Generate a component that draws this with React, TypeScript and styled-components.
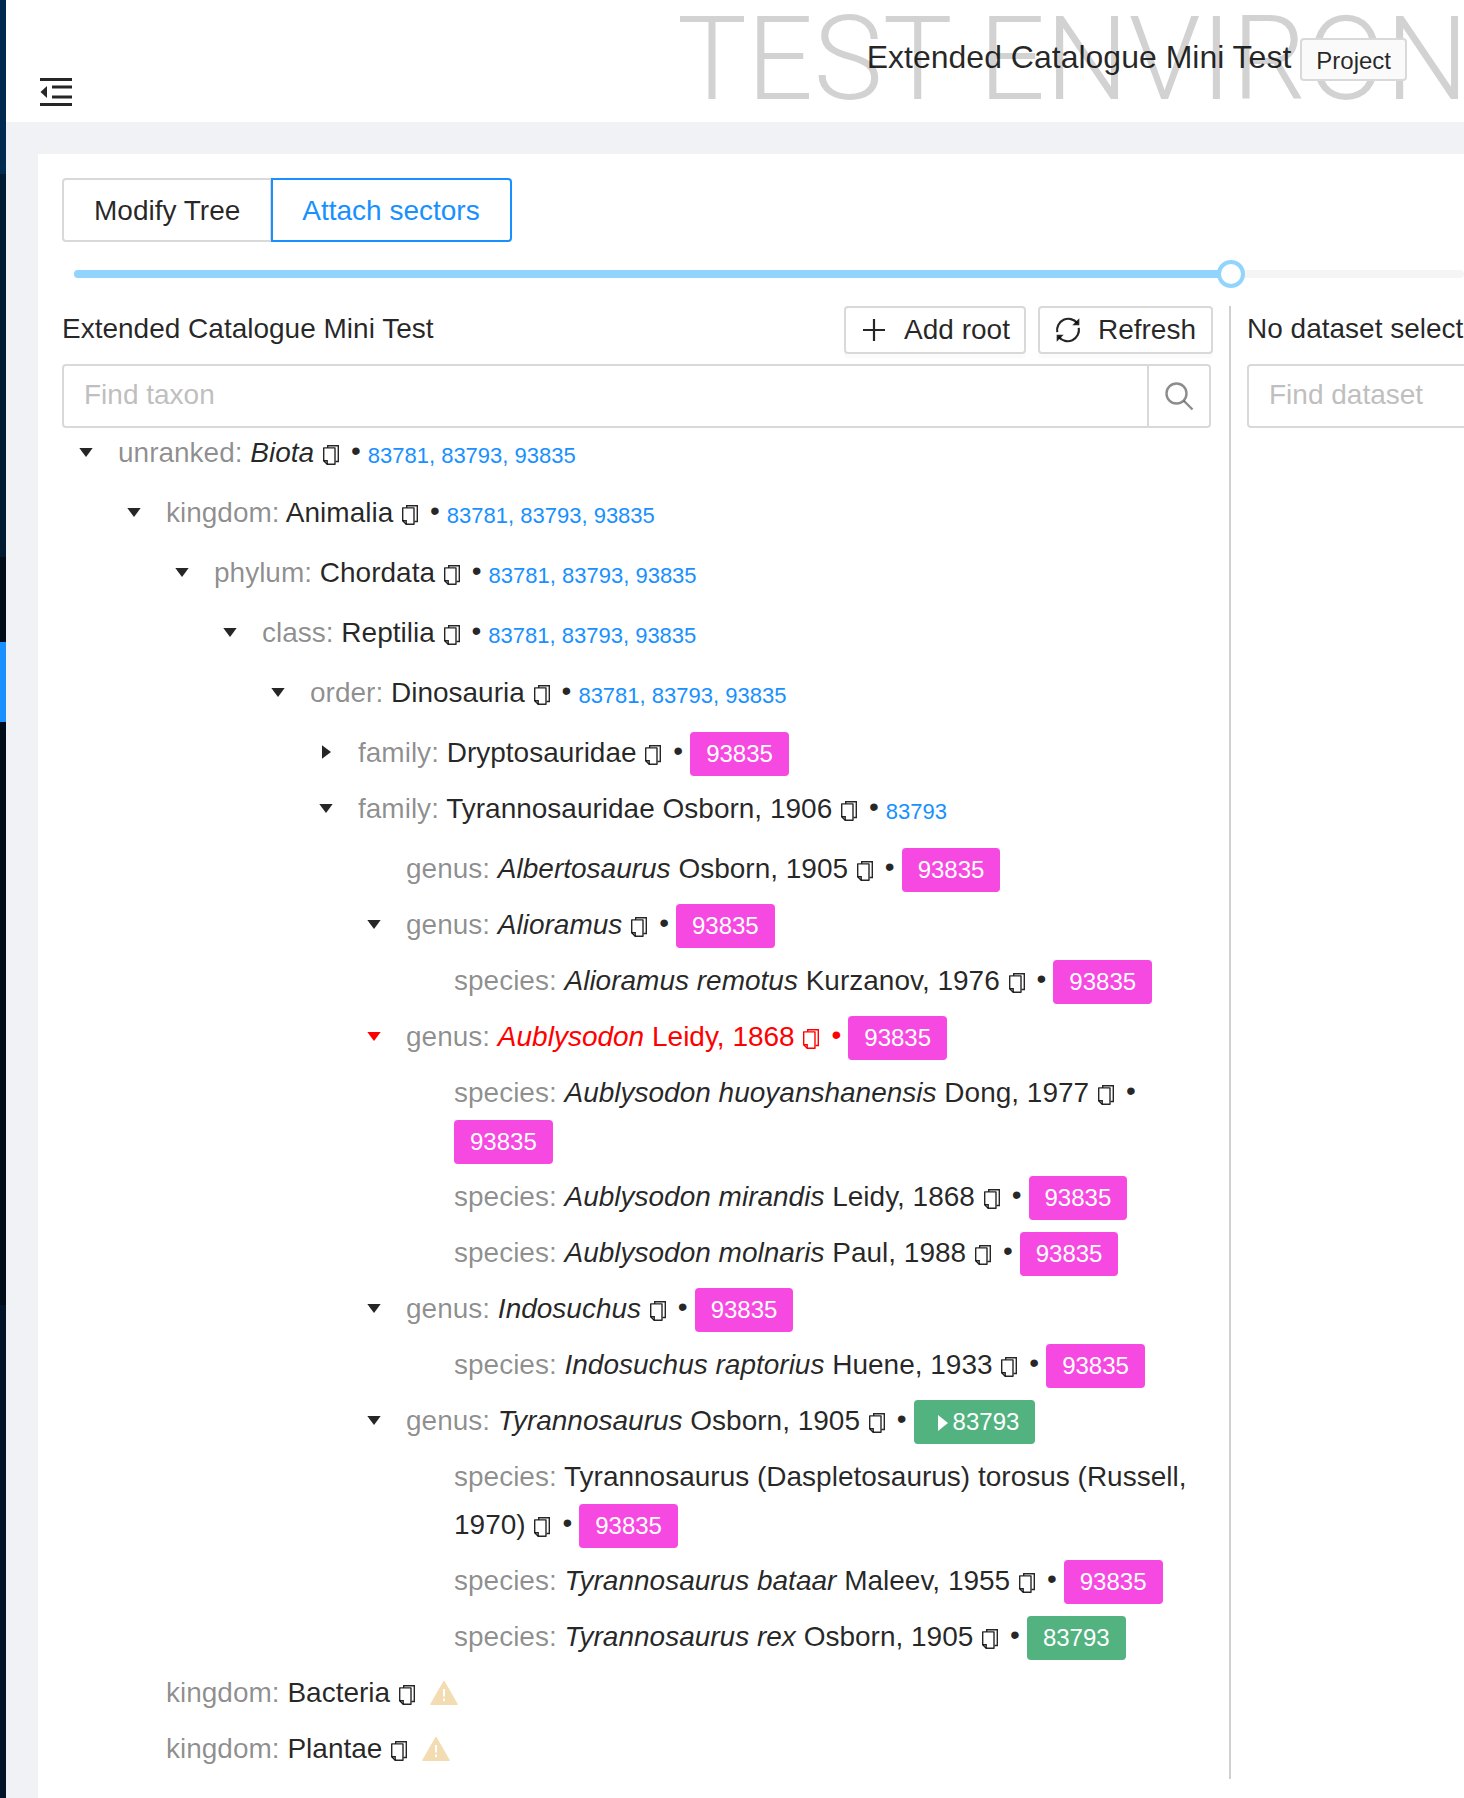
import React from 'react';
import styled, { createGlobalStyle } from 'styled-components';

const GlobalStyle = createGlobalStyle`
    html, body {
        margin: 0;
        padding: 0;
        height: 100%;
        overflow: hidden;
        background: #f0f2f5;
    }
    body {
        font-family: "Liberation Sans", Arial, sans-serif;
        color: rgba(0, 0, 0, 0.85);
    }
`;

const Layout = styled.div`
    display: flex;
    width: 1464px;
    height: 1798px;
    overflow: hidden;
`;

const Sider = styled.aside`
    flex: 0 0 6px;
    display: flex;
    flex-direction: column;
    background: #001529;
`;

const SiderBlock = styled.div<{ $h: number; $color: string }>`
    flex: 0 0 ${p => p.$h}px;
    background: ${p => p.$color};
`;

const Main = styled.div`
    flex: 1;
    min-width: 0;
    display: flex;
    flex-direction: column;
`;

const Header = styled.header`
    position: relative;
    flex: 0 0 122px;
    display: flex;
    justify-content: space-between;
    background: #fff;
    overflow: hidden;
`;

const Watermark = styled.div`
    position: absolute;
    left: 671px;
    top: -6px;
    font-family: Roboto, "Liberation Sans", sans-serif;
    font-weight: 300;
    font-size: 117px;
    line-height: 130px;
    color: #d2d2d2;
    white-space: nowrap;
`;

const Trigger = styled.div`
    margin: 78px 0 0 34px;
    width: 32px;
    height: 28px;
    color: rgba(0, 0, 0, 0.85);
`;

const HeaderRight = styled.div`
    position: relative;
    display: flex;
    align-items: flex-start;
    padding: 38px 57px 0 0;
`;

const HeaderTitle = styled.span`
    font-size: 32px;
    line-height: 38px;
    margin-right: 9px;
`;

const HeaderTag = styled.span`
    height: 43px;
    box-sizing: border-box;
    padding: 0 14px;
    font-size: 24px;
    line-height: 41px;
    background: #fafafa;
    border: 2px solid #d9d9d9;
    border-radius: 4px;
`;

const Content = styled.main`
    flex: 1;
    margin: 32px 0 0 32px;
    padding: 24px 0 0 24px;
    background: #fff;
    min-height: 0;
`;

const Tabs = styled.div`
    display: flex;
`;

const Tab = styled.div<{ $active?: boolean }>`
    height: 64px;
    box-sizing: border-box;
    padding: 0 30px 0 ${p => (p.$active ? 29 : 30)}px;
    font-size: 28px;
    line-height: 62px;
    border: 2px solid ${p => (p.$active ? '#1890ff' : '#d9d9d9')};
    color: ${p => (p.$active ? '#1890ff' : 'rgba(0, 0, 0, 0.85)')};
    margin-left: ${p => (p.$active ? '-1px' : '0')};
    border-radius: ${p => (p.$active ? '0 4px 4px 0' : '4px 0 0 4px')};
    position: relative;
`;

const Slider = styled.div`
    position: relative;
    height: 8px;
    margin: 28px 0 0 12px;
    background: #f5f5f5;
    border-radius: 4px;
`;

const SliderTrack = styled.div`
    height: 8px;
    width: 1157px;
    background: #91d5ff;
    border-radius: 4px;
`;

const SliderHandle = styled.div`
    position: absolute;
    left: 1143px;
    top: -10px;
    width: 28px;
    height: 28px;
    box-sizing: border-box;
    border: 4px solid #91d5ff;
    border-radius: 50%;
    background: #fff;
`;

const Columns = styled.div`
    display: flex;
    margin-top: 28px;
`;

const LeftColumn = styled.section`
    flex: 0 0 1169px;
    box-sizing: border-box;
    padding-right: 16px;
    border-right: 2px solid #d0d0d0;
    height: 1473px;
`;

const RightColumn = styled.section`
    flex: 0 0 260px;
    padding-left: 16px;
    overflow: hidden;
`;

const ColumnHeader = styled.div`
    display: flex;
    align-items: flex-start;
    height: 48px;
    margin-bottom: 10px;
`;

const ColumnTitle = styled.h2`
    margin: 0 auto 0 0;
    font-size: 28px;
    font-weight: 400;
    line-height: 46px;
    white-space: nowrap;
`;

const Button = styled.div<{ $pad: number; $gap: number }>`
    display: flex;
    align-items: center;
    height: 48px;
    box-sizing: border-box;
    margin-left: 12px;
    padding: 0 ${p => (p.$pad === 16 ? 14 : 15)}px 0 ${p => p.$pad}px;
    font-size: 28px;
    border: 2px solid #d9d9d9;
    border-radius: 4px;
    box-shadow: 0 4px 0 rgba(0, 0, 0, 0.015);
    white-space: nowrap;
    svg {
        margin-right: ${p => p.$gap}px;
    }
`;

const Search = styled.div<{ $inset?: boolean }>`
    display: flex;
    height: 64px;
    box-sizing: border-box;
    margin-right: ${p => (p.$inset ? 2 : 0)}px;
    border: 2px solid #d9d9d9;
    border-radius: 4px;
`;

const SearchText = styled.div`
    flex: 1;
    padding-left: 20px;
    font-size: 28px;
    line-height: 58px;
    color: #bfbfbf;
    white-space: nowrap;
`;

const SearchButton = styled.div`
    flex: 0 0 60px;
    display: flex;
    align-items: center;
    justify-content: center;
    border-left: 2px solid #d9d9d9;
    color: rgba(0, 0, 0, 0.45);
`;

const Tree = styled.div`
    padding-top: 1px;
    font-size: 28px;
    line-height: 48px;
`;

const Node = styled.div<{ $level: number; $link?: boolean }>`
    display: flex;
    padding-left: ${p => p.$level * 48}px;
    margin-bottom: ${p => (p.$link ? 12 : 8)}px;
`;

const Switcher = styled.div<{ $danger?: boolean }>`
    flex: 0 0 48px;
    height: 46px;
    display: flex;
    align-items: center;
    justify-content: center;
    color: ${p => (p.$danger ? '#ff0000' : 'rgba(0, 0, 0, 0.85)')};
`;

const NodeText = styled.div<{ $danger?: boolean }>`
    flex: 1;
    min-width: 0;
    padding: 0 8px;
    color: ${p => (p.$danger ? '#ff0000' : 'rgba(0, 0, 0, 0.85)')};
`;

const Rank = styled.span`
    color: rgba(0, 0, 0, 0.45);
`;

const Sci = styled.i`
    font-style: italic;
`;

const Copy = styled.svg`
    display: inline-block;
    width: 16px;
    height: 20px;
    margin: 0 4px 0 1px;
    vertical-align: -3px;
`;

const Dot = styled.span`
    margin: 0 7px 0 8px;
    line-height: 1;
    vertical-align: 2px;
`;

const Links = styled.span`
    font-size: 22px;
    line-height: 1;
    color: #1890ff;
    vertical-align: -1px;
`;

const Tag = styled.span<{ $green?: boolean }>`
    display: inline-block;
    box-sizing: border-box;
    height: 44px;
    padding: 0 16px;
    font-size: 24px;
    line-height: 44px;
    color: #fff;
    border-radius: 4px;
    background: ${p => (p.$green ? '#52b280' : '#f649e1')};
`;

const TagCaret = styled.svg`
    width: 10px;
    height: 16px;
    margin: 0 5px 0 8px;
    vertical-align: -1px;
`;

const Warning = styled.svg`
    width: 28px;
    height: 25px;
    margin-left: 11px;
    vertical-align: -3px;
`;

const FoldIcon = () => (
    <svg width="32" height="28" viewBox="0 0 32 28" fill="currentColor">
        <rect x="0" y="0" width="32" height="3" />
        <rect x="0" y="25" width="32" height="3" />
        <rect x="12" y="7.5" width="20" height="3" />
        <rect x="12" y="17.5" width="20" height="3" />
        <path d="M0.5 14 L7 8 V20 Z" />
    </svg>
);

const CopyIcon = () => (
    <Copy viewBox="0 0 16 20" fill="none" stroke="currentColor" strokeWidth="1.4">
        <path d="M4.7 2.8 V0.7 H15.3 V16.5 H12.6" />
        <path d="M0.7 2.9 H12 V19.3 H4.2 L0.7 15.8 Z" strokeLinejoin="round" />
        <path d="M0.7 15.8 H4.2 V19.3" />
    </Copy>
);

const WarningIcon = () => (
    <Warning viewBox="0 0 28 25">
        <path d="M14 1 L27.5 24.5 H0.5 Z" fill="#f3dcb2" stroke="#f3dcb2" strokeLinejoin="round" />
        <rect x="13" y="9" width="2" height="7.5" fill="#fff" />
        <rect x="13" y="18.5" width="2" height="2.5" fill="#fff" />
    </Warning>
);

const Caret = ({ open }: { open: boolean }) =>
    open ? (
        <svg width="14" height="9" viewBox="0 0 14 9" fill="currentColor">
            <path d="M0.3 0 H13.7 L7 9 Z" />
        </svg>
    ) : (
        <svg width="9" height="14" viewBox="0 0 9 14" fill="currentColor">
            <path d="M0 0.3 V13.7 L9 7 Z" />
        </svg>
    );

type Row = {
    level: number;
    rank: string;
    sci?: string;
    rest?: string;
    caret?: 'open' | 'closed';
    danger?: boolean;
    links?: string;
    tag?: string;
    green?: boolean;
    play?: boolean;
    warn?: boolean;
};

const ALL = '83781, 83793, 93835';

const rows: Row[] = [
    { level: 0, rank: 'unranked', sci: 'Biota', caret: 'open', links: ALL },
    { level: 1, rank: 'kingdom', rest: 'Animalia', caret: 'open', links: ALL },
    { level: 2, rank: 'phylum', rest: 'Chordata', caret: 'open', links: ALL },
    { level: 3, rank: 'class', rest: 'Reptilia', caret: 'open', links: ALL },
    { level: 4, rank: 'order', rest: 'Dinosauria', caret: 'open', links: ALL },
    { level: 5, rank: 'family', rest: 'Dryptosauridae', caret: 'closed', tag: '93835' },
    { level: 5, rank: 'family', rest: 'Tyrannosauridae Osborn, 1906', caret: 'open', links: '83793' },
    { level: 6, rank: 'genus', sci: 'Albertosaurus', rest: 'Osborn, 1905', tag: '93835' },
    { level: 6, rank: 'genus', sci: 'Alioramus', caret: 'open', tag: '93835' },
    { level: 7, rank: 'species', sci: 'Alioramus remotus', rest: 'Kurzanov, 1976', tag: '93835' },
    { level: 6, rank: 'genus', sci: 'Aublysodon', rest: 'Leidy, 1868', caret: 'open', danger: true, tag: '93835' },
    { level: 7, rank: 'species', sci: 'Aublysodon huoyanshanensis', rest: 'Dong, 1977', tag: '93835' },
    { level: 7, rank: 'species', sci: 'Aublysodon mirandis', rest: 'Leidy, 1868', tag: '93835' },
    { level: 7, rank: 'species', sci: 'Aublysodon molnaris', rest: 'Paul, 1988', tag: '93835' },
    { level: 6, rank: 'genus', sci: 'Indosuchus', caret: 'open', tag: '93835' },
    { level: 7, rank: 'species', sci: 'Indosuchus raptorius', rest: 'Huene, 1933', tag: '93835' },
    { level: 6, rank: 'genus', sci: 'Tyrannosaurus', rest: 'Osborn, 1905', caret: 'open', tag: '83793', green: true, play: true },
    { level: 7, rank: 'species', rest: 'Tyrannosaurus (Daspletosaurus) torosus (Russell, 1970)', tag: '93835' },
    { level: 7, rank: 'species', sci: 'Tyrannosaurus bataar', rest: 'Maleev, 1955', tag: '93835' },
    { level: 7, rank: 'species', sci: 'Tyrannosaurus rex', rest: 'Osborn, 1905', tag: '83793', green: true },
    { level: 1, rank: 'kingdom', rest: 'Bacteria', warn: true },
    { level: 1, rank: 'kingdom', rest: 'Plantae', warn: true },
];

const TreeRow = ({ row }: { row: Row }) => (
    <Node $level={row.level} $link={!!row.links}>
        <Switcher $danger={row.danger}>
            {row.caret && <Caret open={row.caret === 'open'} />}
        </Switcher>
        <NodeText $danger={row.danger}>
            <Rank>{row.rank}:</Rank> {row.sci && <Sci>{row.sci}</Sci>}
            {row.sci && row.rest ? ' ' : ''}
            {row.rest} <CopyIcon />
            {row.warn ? (
                <WarningIcon />
            ) : (
                <>
                    <Dot>•</Dot>
                    {row.links && <Links>{row.links}</Links>}
                    {row.tag && (
                        <Tag $green={row.green}>
                            {row.play && (
                                <TagCaret viewBox="0 0 10 16" fill="#fff">
                                    <path d="M0 0 L10 8 L0 16 Z" />
                                </TagCaret>
                            )}
                            {row.tag}
                        </Tag>
                    )}
                </>
            )}
        </NodeText>
    </Node>
);

const App = () => (
    <>
        <GlobalStyle />
        <Layout>
            <Sider>
                <SiderBlock $h={174} $color="#002a50" />
                <SiderBlock $h={383} $color="#001a33" />
                <SiderBlock $h={85} $color="#000c17" />
                <SiderBlock $h={80} $color="#1890ff" />
                <SiderBlock $h={583} $color="#000c17" />
                <SiderBlock $h={493} $color="#001529" />
            </Sider>
            <Main>
                <Header>
                    <Trigger>
                        <FoldIcon />
                    </Trigger>
                    <Watermark>TEST ENVIRON</Watermark>
                    <HeaderRight>
                        <HeaderTitle>Extended Catalogue Mini Test</HeaderTitle>
                        <HeaderTag>Project</HeaderTag>
                    </HeaderRight>
                </Header>
                <Content>
                    <Tabs>
                        <Tab>Modify Tree</Tab>
                        <Tab $active>Attach sectors</Tab>
                    </Tabs>
                    <Slider>
                        <SliderTrack />
                        <SliderHandle />
                    </Slider>
                    <Columns>
                        <LeftColumn>
                            <ColumnHeader>
                                <ColumnTitle>Extended Catalogue Mini Test</ColumnTitle>
                                <Button $pad={16} $gap={18}>
                                    <svg width="24" height="24" viewBox="0 0 24 24" fill="none" stroke="currentColor" strokeWidth="2.2">
                                        <path d="M12 1 V23 M1 12 H23" />
                                    </svg>
                                    Add root
                                </Button>
                                <Button $pad={14} $gap={16}>
                                    <svg width="28" height="28" viewBox="0 0 26 26" fill="none" stroke="currentColor" strokeWidth="2">
                                        <path d="M3 15 A10.5 10.5 0 0 1 21.5 6.5" />
                                        <path d="M23 11 A10.5 10.5 0 0 1 4.5 19.5" />
                                        <path d="M23.5 2 V8.5 H17 Z" fill="currentColor" stroke="none" />
                                        <path d="M2.5 24 V17.5 H9 Z" fill="currentColor" stroke="none" />
                                    </svg>
                                    Refresh
                                </Button>
                            </ColumnHeader>
                            <Search $inset>
                                <SearchText>Find taxon</SearchText>
                                <SearchButton>
                                    <svg width="30" height="30" viewBox="0 0 30 30" fill="none" stroke="currentColor" strokeWidth="2.4">
                                        <circle cx="12.5" cy="12.5" r="10" />
                                        <path d="M20 20 L28.5 28.5" />
                                    </svg>
                                </SearchButton>
                            </Search>
                            <Tree>
                                {rows.map((row, i) => (
                                    <TreeRow key={i} row={row} />
                                ))}
                            </Tree>
                        </LeftColumn>
                        <RightColumn>
                            <ColumnHeader>
                                <ColumnTitle>No dataset selected</ColumnTitle>
                            </ColumnHeader>
                            <Search>
                                <SearchText>Find dataset</SearchText>
                            </Search>
                        </RightColumn>
                    </Columns>
                </Content>
            </Main>
        </Layout>
    </>
);

export default App;
